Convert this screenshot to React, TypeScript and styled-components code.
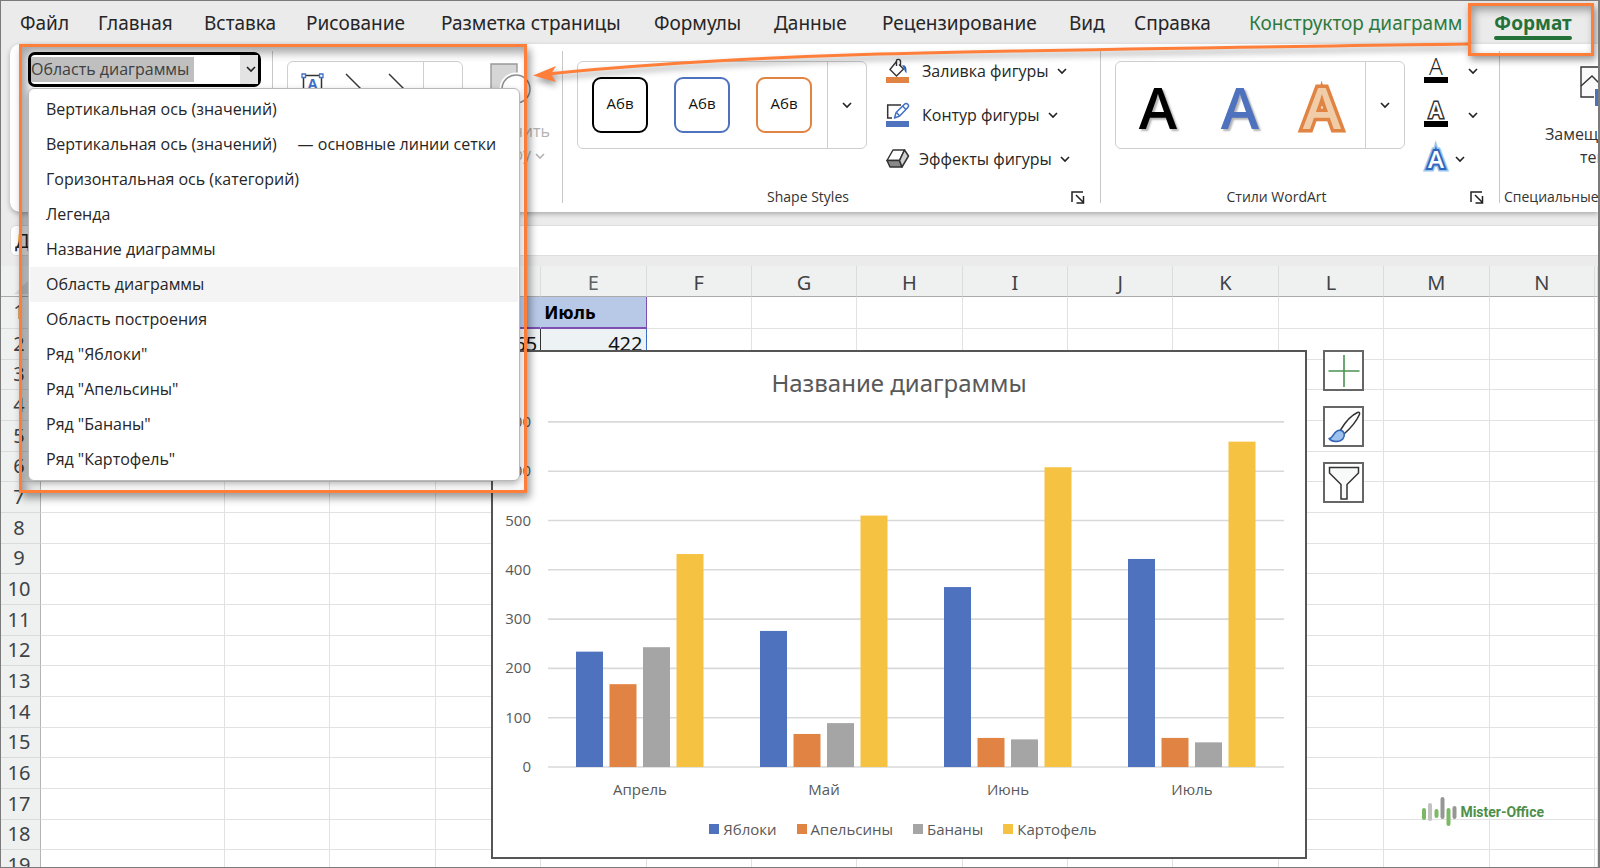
import React from "react";
import styled, { createGlobalStyle, css } from "styled-components";

const ORANGE = "#ff7f3a";
const BLUE = "#4f72bf";
const GREEN = "#24713a";

const Global = createGlobalStyle`
  * { box-sizing: border-box; }
  body { margin: 0; background: #ebebeb; font-family: "Noto Sans", "Open Sans", sans-serif; color: #262626; }
  button { font: inherit; color: inherit; background: none; border: 0; padding: 0; }
  input { font: inherit; color: inherit; border: 0; padding: 0; outline: 0; min-width: 0; }
`;

const Window = styled.div`
  position: relative;
  display: flex;
  flex-direction: column;
  height: 100vh;
  overflow: hidden;
  background: #ebebeb;
  border: 1px solid #7b7b7b;
  border-right-width: 2px;
`;

/* ---------- tabs ---------- */
const TabBar = styled.nav`
  display: grid;
  grid-template-columns: 78px 106px 102px 135px 213px 120px 108px 187px 65px 115px 245px auto;
  justify-content: start;
  align-items: center;
  flex: none;
  height: 43px;
  padding-left: 19px;
`;

const Tab = styled.a<{ $kind?: "context" | "active" }>`
  position: relative;
  justify-self: start;
  font-size: 19px;
  line-height: 26px;
  white-space: nowrap;
  text-decoration: none;
  color: ${(p) => (p.$kind ? "#2d7a40" : "#262626")};
  ${(p) =>
    p.$kind === "active" &&
    css`
      color: ${GREEN};
      font-weight: 700;
      &::after {
        content: "";
        position: absolute;
        left: 0;
        right: 0;
        bottom: -4px;
        height: 4px;
        border-radius: 2px;
        background: ${GREEN};
      }
    `}
`;

const TabCallout = styled.span`
  position: absolute;
  z-index: 5;
  left: -26px;
  right: -22px;
  top: -7px;
  height: 53px;
  border: 3px solid ${ORANGE};
  box-shadow: 2px 4px 7px rgba(0, 0, 0, 0.4), inset 3px 4px 8px rgba(0, 0, 0, 0.35);
  pointer-events: none;
`;

/* ---------- ribbon ---------- */
const Ribbon = styled.section`
  position: relative;
  z-index: 2;
  display: flex;
  align-items: flex-start;
  flex: none;
  margin-left: 9px;
  padding: 7px 0 5px;
  background: #fff;
  border-radius: 10px 0 0 10px;
  box-shadow: 0 2px 5px rgba(0, 0, 0, 0.28);
`;

const Group = styled.div<{ $width?: number }>`
  position: relative;
  display: flex;
  flex-direction: column;
  flex: ${(p) => (p.$width ? `0 0 ${p.$width}px` : "1 1 0")};
  min-width: 0;
  overflow: ${(p) => (p.$width ? "visible" : "hidden")};
`;

const Divider = styled.span`
  flex: none;
  width: 1px;
  height: 152px;
  background: #c8c8c8;
`;

const GroupBody = styled.div`
  display: flex;
  align-items: flex-start;
  height: 136px;
  padding-left: 14px;
`;

const GroupFooter = styled.div`
  display: flex;
  align-items: center;
  height: 20px;
  font: 14px/20px "Open Sans", "Noto Sans", sans-serif;
  color: #333;
`;

const GroupLabel = styled.span<{ $start?: boolean }>`
  flex: 1;
  padding-left: ${(p) => (p.$start ? 4 : 0)}px;
  text-align: ${(p) => (p.$start ? "left" : "center")};
  white-space: nowrap;
`;

const Launcher = styled.button`
  display: flex;
  margin: 0 15px 0 18px;
`;

const ComboRow = styled.div`
  padding: 1px 0 0 18px;
  height: 136px;
`;

const Combo = styled.div`
  position: relative;
  z-index: 4;
  display: flex;
  align-items: center;
  justify-content: space-between;
  width: 233px;
  height: 35px;
  background: #fff;
  border: 3px solid #000;
  border-radius: 7px;
`;

const ComboInput = styled.input`
  width: 163px;
  height: 25px;
  background: #bfbfbf;
  font: 16px/25px "Open Sans", "Noto Sans", sans-serif;
  color: #404040;
`;

const ComboButton = styled.button`
  display: flex;
  align-items: center;
  justify-content: flex-end;
  align-self: stretch;
  width: 18px;
  padding-right: 2px;
  background: #e3e3e3;
`;

const Menu = styled.ul`
  position: absolute;
  z-index: 4;
  left: 18px;
  top: 37px;
  width: 492px;
  margin: 0;
  padding: 3px 1px;
  list-style: none;
  background: #fff;
  border: 1px solid #b9b9b9;
  border-radius: 6px;
  box-shadow: 0 3px 7px rgba(0, 0, 0, 0.3);
`;

const MenuItem = styled.button<{ $current: boolean }>`
  display: block;
  width: 100%;
  height: 35px;
  padding-left: 16px;
  text-align: left;
  white-space: pre;
  font: 16px/35px "Open Sans", "Noto Sans", sans-serif;
  background: ${(p) => (p.$current ? "#f4f4f4" : "transparent")};
`;

const MenuCallout = styled.span`
  position: absolute;
  z-index: 3;
  left: 9px;
  top: -7px;
  width: 508px;
  height: 449px;
  border: 3px solid ${ORANGE};
  box-shadow: 3px 5px 8px rgba(0, 0, 0, 0.4), inset 5px 6px 10px rgba(0, 0, 0, 0.35);
  pointer-events: none;
`;

const ArrowCallout = styled.svg`
  position: absolute;
  z-index: 4;
  left: 531px;
  top: 34px;
  pointer-events: none;
  filter: drop-shadow(1px 4px 3px rgba(0, 0, 0, 0.4));
`;

const Gallery = styled.div`
  display: flex;
  height: 88px;
  margin-top: 10px;
  border: 1px solid #cfcfcf;
  border-radius: 6px;
`;

const GalleryItems = styled.div<{ $compact?: boolean }>`
  display: flex;
  align-items: ${(p) => (p.$compact ? "flex-start" : "center")};
  gap: ${(p) => (p.$compact ? 21 : 26)}px;
  padding: ${(p) => (p.$compact ? "11px 13px 0" : "0 15px 0 14px")};
`;

const GalleryMore = styled.button`
  display: flex;
  align-items: center;
  justify-content: center;
  width: 39px;
  border-left: 1px solid #cfcfcf;
`;

const StyleSwatch = styled.button<{ $color: string }>`
  width: 56px;
  height: 56px;
  padding-bottom: 4px;
  border: 2px solid ${(p) => p.$color};
  border-radius: 9px;
  font: 15px/20px "Open Sans", "Noto Sans", sans-serif;
  color: #111;
`;

const ArtSwatch = styled.button<{ $fill: string; $outline?: string }>`
  width: 56px;
  height: 58px;
  font: 600 58px/62px "Open Sans", sans-serif;
  text-align: center;
  color: ${(p) => p.$fill};
  paint-order: stroke;
  stroke-linejoin: round;
  -webkit-text-stroke: ${(p) => (p.$outline ? `7px ${p.$outline}` : "0")};
  text-shadow: ${(p) => (p.$outline ? "none" : "2px 2px 2px rgba(0, 0, 0, 0.3)")};
`;

const BigButton = styled.button<{ $muted?: boolean }>`
  display: flex;
  flex-direction: column;
  align-items: center;
  gap: 16px;
  width: ${(p) => (p.$muted ? 90 : 112)}px;
  margin: ${(p) => (p.$muted ? "12px 0 0 3px" : "14px 0 0 30px")};
  flex: none;
  font: 16px/23px "Open Sans", "Noto Sans", sans-serif;
  color: ${(p) => (p.$muted ? "#b3b3b3" : "#333")};
`;

const OptionColumn = styled.div`
  display: flex;
  flex-direction: column;
  margin-left: 19px;
`;

const OptionButton = styled.button<{ $gap: number }>`
  display: flex;
  align-items: center;
  height: 44px;
  padding-bottom: 4px;
  gap: ${(p) => p.$gap}px;
  white-space: nowrap;
  font: 16px/24px "Open Sans", "Noto Sans", sans-serif;
`;

const OptionText = styled.span`
  display: flex;
  align-items: center;
  gap: 8px;
`;

/* ---------- formula bar ---------- */
const FormulaRow = styled.div`
  display: flex;
  flex: none;
  gap: 8px;
  padding: 13px 0 10px 9px;
`;

const NameBox = styled.input`
  width: 200px;
  height: 31px;
  padding-left: 4px;
  background: #fff;
  border: 1px solid #dcdcdc;
  border-radius: 6px;
  font-size: 20px;
`;

const FormulaInput = styled.input`
  flex: 1;
  height: 31px;
  background: #fff;
  border: 1px solid #dedede;
  border-right: 0;
`;

/* ---------- sheet ---------- */
const Sheet = styled.main`
  position: relative;
  flex: 1;
  overflow: hidden;
  background: #fff;
`;

const Grid = styled.table`
  width: 100%;
  height: 615px;
  table-layout: fixed;
  border-collapse: separate;
  border-spacing: 0;
  font-size: 20px;
  line-height: 24px;
`;

const ColHead = styled.th<{ $active?: boolean }>`
  height: 31px;
  padding: 3px 0 0;
  font-weight: 400;
  color: ${(p) => (p.$active ? "#5c6265" : "#3f4347")};
  background: #eff1f0;
  border-right: 1px solid #dcdcdc;
  border-bottom: 1px solid #ababab;
`;

const RowHead = styled.th`
  padding: 0 3px 0 0;
  font-weight: 400;
  color: #3f4347;
  background: #eff1f0;
  border-right: 1px solid #b4b4b4;
  border-bottom: 1px solid #d9dbda;
`;

const Cell = styled.td<{ $kind?: "head" | "value" | "plain"; $last?: boolean }>`
  padding: 0 3px;
  border-right: 1px solid #e2e2e2;
  border-bottom: 1px solid #e2e2e2;
  ${(p) =>
    p.$kind === "head" &&
    css`
      background: #b8c8e7;
      font-size: 18px;
      font-weight: 700;
      color: #000;
      border-right-color: ${p.$last ? "#7d4fb3" : "#b8c8e7"};
      border-bottom: 2px solid #7d4fb3;
    `}
  ${(p) =>
    p.$kind === "value" &&
    css`
      background: #edf2f4;
      text-align: right;
      color: #111;
      border-right-color: ${p.$last ? "#3b70c4" : "#333"};
    `}
`;

const Corner = styled.th`
  padding: 0;
  background: #eff1f0;
  border-right: 1px solid #dcdcdc;
  border-bottom: 1px solid #ababab;
  vertical-align: bottom;
  text-align: right;
  line-height: 0;
`;

/* ---------- chart ---------- */
const ChartObject = styled.figure`
  position: absolute;
  left: 490px;
  top: 84px;
  display: flex;
  flex-direction: column;
  align-items: center;
  width: 816px;
  height: 509px;
  margin: 0;
  padding-top: 14px;
  background: #fff;
  border: 2px solid #555;
  color: #595959;
`;

const ChartTitle = styled.figcaption`
  margin-bottom: 3px;
  font: 24px/34px "Noto Sans", sans-serif;
`;

const Plot = styled.svg`
  display: block;
  font: 15px "Open Sans", "Noto Sans", sans-serif;
`;

const Legend = styled.ul`
  display: flex;
  gap: 20px;
  margin: 0;
  padding: 4px 0 0 8px;
  list-style: none;
  font: 15px/20px "Open Sans", "Noto Sans", sans-serif;
`;

const LegendItem = styled.li<{ $color: string }>`
  display: flex;
  align-items: center;
  gap: 4px;
  &::before {
    content: "";
    width: 10px;
    height: 10px;
    background: ${(p) => p.$color};
  }
`;

const ChartTools = styled.div`
  position: absolute;
  left: 1322px;
  top: 84px;
  display: flex;
  flex-direction: column;
  gap: 15px;
`;

const ChartTool = styled.button`
  display: flex;
  align-items: center;
  justify-content: center;
  width: 41px;
  height: 41px;
  background: #fff;
  border: 2px solid #666;
`;

const Watermark = styled.div`
  position: absolute;
  right: 54px;
  bottom: 40px;
  display: flex;
  align-items: center;
  gap: 3px;
  font: 700 14px/20px Roboto, sans-serif;
  color: #4d8f4a;
`;

/* ---------- icons ---------- */
const Chevron = ({ color = "#222" }: { color?: string }) => (
  <svg width="10" height="7" viewBox="0 0 10 7" fill="none" stroke={color} strokeWidth="1.6">
    <path d="M1 1l4 4 4-4" />
  </svg>
);

const LauncherIcon = () => (
  <svg width="14" height="13" viewBox="0 0 14 13" fill="none" stroke="#222" strokeWidth="1.5">
    <path d="M1 11V1h11M5 4l7 7M12.5 5v7h-7" />
  </svg>
);

const FillIcon = () => (
  <svg width="24" height="26" viewBox="0 0 24 26" fill="none">
    <path d="M10.5 3.5 4 11.5l6.5 6.5 7-7L13 6.5" fill="#fff" stroke="#333" strokeWidth="1.4" />
    <path d="M10.5 8V2.8C10.5.8 14.5.8 14.5 3.5v4.5" stroke="#333" strokeWidth="1.4" />
    <path d="M16 7.5c3-.8 4.5 1.5 4.5 4.2v3.6c-1.600-1-2.200-3.600-2.600-5z" fill="#2f64b8" />
    <path d="M0 19h23v6H0z" fill="#e08343" />
  </svg>
);

const OutlineIcon = () => (
  <svg width="24" height="26" viewBox="0 0 24 26" fill="none">
    <path d="M15 3H1.700V16H6" stroke="#333" strokeWidth="1.5" />
    <path d="M8.500 16l1.600-5.500L18.500 2.200c1-1 2.500-.8 3.300 0s.9 2.200 0 3.200L13.700 14z" fill="#fff" stroke="#3f70c6" strokeWidth="1.500" strokeLinejoin="round" />
    <path d="M16.500 4l3.500 3.500M10.500 10.500l3 3.300" stroke="#3f70c6" strokeWidth="1.400" />
    <path d="M0 19h23v6H0z" fill={BLUE} />
  </svg>
);

const EffectsIcon = () => (
  <svg width="24" height="22" viewBox="0 0 24 22" stroke="#333" strokeWidth="1.5" strokeLinejoin="round">
    <path d="M7 2h11.500l-5 10.500H1z" fill="#fff" />
    <path d="M1 12.500h12.500L16 19H4z" fill="#8a8a8a" />
    <path d="M18.500 2 22.500 8 16 19l-2.500-6.500z" fill="#d0d0d0" />
  </svg>
);

const LetterSvg = styled.svg`
  overflow: visible;
  font-family: "Open Sans", sans-serif;
`;

const LetterIcon = ({ kind }: { kind: "fill" | "outline" | "effect" }) => (
  <LetterSvg width="24" height="26" viewBox="0 0 24 26" textAnchor="middle">
    {kind === "fill" && <text x="12" y="17" fontSize="23" fontWeight="300" fill="#222">A</text>}
    {kind === "outline" && (
      <text x="12" y="16" fontSize="21" fontWeight="600" fill="#fff" stroke="#333" strokeWidth="3" paintOrder="stroke">A</text>
    )}
    {kind === "effect" ? (
      <g fontSize="24" fontWeight="600">
        <text x="12" y="22" fill="#9cc3ec" stroke="#9cc3ec" strokeWidth="7">A</text>
        <text x="12" y="22" fill="#fff" stroke="#2f66bd" strokeWidth="4" paintOrder="stroke">A</text>
      </g>
    ) : (
      <path d="M0 19h24v6H0z" fill="#000" />
    )}
  </LetterSvg>
);

const TextBoxIcon = () => (
  <svg width="23" height="22" viewBox="0 0 23 22" fill="none">
    <path d="M2.5 2.5h18v17h-18z" stroke="#333" strokeWidth="1.5" />
    <path d="M1 1h3.500v3.500H1zM18.500 1H22v3.500h-3.500z" fill="#fff" stroke="#3f70c6" strokeWidth="1.300" />
    <text x="11.5" y="16" fontSize="14" fontWeight="700" fontFamily="Open Sans, sans-serif" textAnchor="middle" fill="#3f70c6">A</text>
  </svg>
);

const LineIcon = () => (
  <svg width="22" height="22" viewBox="0 0 22 22" fill="none" stroke="#333" strokeWidth="1.4">
    <path d="M1 1l20 20" />
  </svg>
);

const ShapeIcon = () => (
  <svg width="42" height="41" viewBox="0 0 42 41">
    <path d="M1 1h26v30H1z" fill="#d6d6d6" stroke="#999" strokeWidth="1.4" />
    <circle cx="26" cy="26" r="16.5" fill="#fff" />
    <circle cx="26" cy="26" r="14" fill="#fff" stroke="#8e8e8e" strokeWidth="1.5" />
  </svg>
);

const AltTextIcon = () => (
  <svg width="40" height="42" viewBox="0 0 40 42" fill="none">
    <path d="M1 2h38v30H1z" fill="#fafafa" stroke="#333" strokeWidth="1.4" />
    <path d="M1 21l11-10 12 12" stroke="#333" strokeWidth="1.4" />
    <path d="M14 22h26v19H14z" fill="#fff" />
    <path d="M15 24h25v17H15z" fill={BLUE} />
  </svg>
);

const BrushIcon = () => (
  <svg width="34" height="34" viewBox="0 0 34 34" strokeWidth="1.5" strokeLinejoin="round">
    <path d="M13.5 20C18 12.500 25 5 30.500 2.500c2-.6 2.600.6 1.800 2.200C29.500 11 22 19.500 17 24z" fill="#fff" stroke="#333" />
    <path d="M2 28.500c4.500.2 4.500-8.500 11-8.200 4.500.4 5.500 5.500 3 8.500-3.500 4-11 3.500-14-.3z" fill="#9cc1ee" stroke="#2f62b5" />
  </svg>
);

const FunnelIcon = () => (
  <svg width="34" height="36" viewBox="0 0 34 36">
    <path d="M2.5 2.5h29v5.500L20 19.500V34h-6V19.500L2.500 8z" fill="#f8fafa" stroke="#333" strokeWidth="1.5" />
  </svg>
);

const PlusIcon = () => (
  <svg width="34" height="34" viewBox="0 0 34 34" stroke="#4b9350" strokeWidth="1.6">
    <path d="M17 1v32M1.500 17h31" />
  </svg>
);

const WatermarkIcon = () => (
  <svg width="35" height="30" viewBox="0 0 35 30" strokeWidth="4" strokeLinecap="round">
    <path d="M2 13v8M14.5 14v5M26.5 13v14" stroke="#7db965" />
    <path d="M8 8v14" stroke="#c2c2c2" />
    <path d="M20.5 2v18M32.5 11v9" stroke="#969696" />
  </svg>
);

/* ---------- data ---------- */
const tabs: { label: string; kind?: "context" | "active" }[] = [
  { label: "Файл" }, { label: "Главная" }, { label: "Вставка" }, { label: "Рисование" },
  { label: "Разметка страницы" }, { label: "Формулы" }, { label: "Данные" },
  { label: "Рецензирование" }, { label: "Вид" }, { label: "Справка" },
  { label: "Конструктор диаграмм", kind: "context" }, { label: "Формат", kind: "active" },
];

const elements = [
  "Вертикальная ось (значений)", "Вертикальная ось (значений)     — основные линии сетки",
  "Горизонтальная ось (категорий)", "Легенда", "Название диаграммы", "Область диаграммы",
  "Область построения", 'Ряд "Яблоки"', 'Ряд "Апельсины"', 'Ряд "Бананы"', 'Ряд "Картофель"',
];

const series = [
  { name: "Яблоки", color: BLUE, values: [234, 276, 365, 422] },
  { name: "Апельсины", color: "#e08343", values: [168, 67, 59, 59] },
  { name: "Бананы", color: "#a5a5a5", values: [243, 89, 56, 50] },
  { name: "Картофель", color: "#f5c242", values: [432, 510, 608, 660] },
];
const months = ["Апрель", "Май", "Июнь", "Июль"];
const columns = "ABCDEFGHIJKLMN".split("");
const rows = Array.from({ length: 19 }, (_, i) => i + 1);

const PLOT = { left: 55, right: 791, base: 364, step: 49.3 };

function ChartPlot() {
  const band = (PLOT.right - PLOT.left) / months.length;
  return (
    <Plot width="812" height="412" viewBox="0 0 812 412" role="img" aria-label="Диаграмма">
      {[0, 1, 2, 3, 4, 5, 6, 7].map((n) => {
        const y = PLOT.base - n * PLOT.step;
        return (
          <g key={n}>
            <path d={`M${PLOT.left} ${y}H${PLOT.right}`} stroke="#d9d9d9" strokeWidth="1.6" />
            <text x="38" y={y + 5} textAnchor="end" fill="#595959">{n * 100}</text>
          </g>
        );
      })}
      {months.map((month, m) => (
        <g key={month}>
          {series.map((s, i) => {
            const h = (s.values[m] / 100) * PLOT.step;
            return (
              <rect key={s.name} x={PLOT.left + m * band + 28 + i * 33.5} y={PLOT.base - h} width="27" height={h} fill={s.color} />
            );
          })}
          <text x={PLOT.left + (m + 0.5) * band} y={PLOT.base + 28} textAnchor="middle" fill="#595959">{month}</text>
        </g>
      ))}
    </Plot>
  );
}

function SheetCell({ col, row }: { col: string; row: number }) {
  if (row === 1 && (col === "D" || col === "E"))
    return <Cell $kind="head" $last={col === "E"}>{col === "E" ? "Июль" : "Июнь"}</Cell>;
  if (row === 2 && (col === "D" || col === "E"))
    return <Cell $kind="value" $last={col === "E"}>{col === "E" ? 422 : 365}</Cell>;
  return <Cell />;
}

export default function App() {
  return (
    <Window>
      <Global />
      <TabBar>
        {tabs.map((t) => (
          <Tab key={t.label} href="#" $kind={t.kind}>
            {t.label}
            {t.kind === "active" && <TabCallout />}
          </Tab>
        ))}
      </TabBar>

      <Ribbon>
        <Group $width={262}>
          <ComboRow>
            <Combo>
              <ComboInput aria-label="Элемент диаграммы" defaultValue="Область диаграммы" />
              <ComboButton aria-label="Открыть список"><Chevron /></ComboButton>
            </Combo>
          </ComboRow>
          <MenuCallout />
          <Menu>
            {elements.map((e) => (
              <li key={e}><MenuItem $current={e === "Область диаграммы"}>{e}</MenuItem></li>
            ))}
          </Menu>
        </Group>
        <Divider />
        <Group $width={289}>
          <GroupBody>
            <Gallery>
              <GalleryItems $compact><TextBoxIcon /><LineIcon /><LineIcon /></GalleryItems>
              <GalleryMore aria-label="Другие фигуры" />
            </Gallery>
            <BigButton $muted>
              <ShapeIcon />
              <span>Изменить<br />фигуру <Chevron color="#b3b3b3" /></span>
            </BigButton>
          </GroupBody>
        </Group>
        <Divider />
        <Group $width={537}>
          <GroupBody>
            <Gallery>
              <GalleryItems>
                <StyleSwatch $color="#000">Абв</StyleSwatch>
                <StyleSwatch $color={BLUE}>Абв</StyleSwatch>
                <StyleSwatch $color="#e08343">Абв</StyleSwatch>
              </GalleryItems>
              <GalleryMore aria-label="Другие стили фигур"><Chevron /></GalleryMore>
            </Gallery>
            <OptionColumn>
              <OptionButton $gap={12}><FillIcon /><OptionText>Заливка фигуры <Chevron /></OptionText></OptionButton>
              <OptionButton $gap={12}><OutlineIcon /><OptionText>Контур фигуры <Chevron /></OptionText></OptionButton>
              <OptionButton $gap={9}><EffectsIcon /><OptionText>Эффекты фигуры <Chevron /></OptionText></OptionButton>
            </OptionColumn>
          </GroupBody>
          <GroupFooter>
            <GroupLabel>Shape Styles</GroupLabel>
            <Launcher aria-label="Формат фигуры"><LauncherIcon /></Launcher>
          </GroupFooter>
        </Group>
        <Divider />
        <Group $width={398}>
          <GroupBody>
            <Gallery>
              <GalleryItems>
                <ArtSwatch $fill="#000">A</ArtSwatch>
                <ArtSwatch $fill={BLUE}>A</ArtSwatch>
                <ArtSwatch $fill="#f0cda8" $outline="#e08343">A</ArtSwatch>
              </GalleryItems>
              <GalleryMore aria-label="Другие стили WordArt"><Chevron /></GalleryMore>
            </Gallery>
            <OptionColumn>
              <OptionButton $gap={20} aria-label="Заливка текста"><LetterIcon kind="fill" /><Chevron /></OptionButton>
              <OptionButton $gap={20} aria-label="Контур текста"><LetterIcon kind="outline" /><Chevron /></OptionButton>
              <OptionButton $gap={7} aria-label="Текстовые эффекты"><LetterIcon kind="effect" /><Chevron /></OptionButton>
            </OptionColumn>
          </GroupBody>
          <GroupFooter>
            <GroupLabel>Стили WordArt</GroupLabel>
            <Launcher aria-label="Формат текста"><LauncherIcon /></Launcher>
          </GroupFooter>
        </Group>
        <Divider />
        <Group>
          <GroupBody>
            <BigButton>
              <AltTextIcon />
              <span>Замещающий<br />текст</span>
            </BigButton>
          </GroupBody>
          <GroupFooter><GroupLabel $start>Специальные возможности</GroupLabel></GroupFooter>
        </Group>
      </Ribbon>

      <ArrowCallout width="940" height="50" viewBox="0 0 940 50" fill="none">
        <path d="M16 39C228 17 448 16 936 9" stroke={ORANGE} strokeWidth="3" />
        <path d="M1 40.500 24 31l-5 8 5 8z" fill={ORANGE} />
      </ArrowCallout>

      <FormulaRow>
        <NameBox aria-label="Поле имени" defaultValue="Диаграмма 1" />
        <FormulaInput aria-label="Строка формул" />
      </FormulaRow>

      <Sheet>
        <Grid>
          <colgroup>
            <col width="40" />
            <col width="184" />
            {columns.slice(1).map((c) => <col key={c} />)}
            <col width="3" />
          </colgroup>
          <thead>
            <tr>
              <Corner aria-label="Выделить всё">
                <svg width="26" height="16" viewBox="0 0 26 16"><path d="M14 1v13H0z" fill="#d9dbda" /></svg>
              </Corner>
              {columns.map((c) => <ColHead key={c} scope="col" $active={c === "E"}>{c}</ColHead>)}
              <ColHead aria-label="O" />
            </tr>
          </thead>
          <tbody>
            {rows.map((r) => (
              <tr key={r}>
                <RowHead scope="row">{r}</RowHead>
                {columns.map((c) => <SheetCell key={c} col={c} row={r} />)}
                <Cell />
              </tr>
            ))}
          </tbody>
        </Grid>

        <ChartObject>
          <ChartTitle>Название диаграммы</ChartTitle>
          <ChartPlot />
          <Legend>
            {series.map((s) => <LegendItem key={s.name} $color={s.color}>{s.name}</LegendItem>)}
          </Legend>
        </ChartObject>

        <ChartTools>
          <ChartTool aria-label="Элементы диаграммы"><PlusIcon /></ChartTool>
          <ChartTool aria-label="Стили диаграммы"><BrushIcon /></ChartTool>
          <ChartTool aria-label="Фильтры диаграммы"><FunnelIcon /></ChartTool>
        </ChartTools>

        <Watermark><WatermarkIcon />Mister-Office</Watermark>
      </Sheet>
    </Window>
  );
}
